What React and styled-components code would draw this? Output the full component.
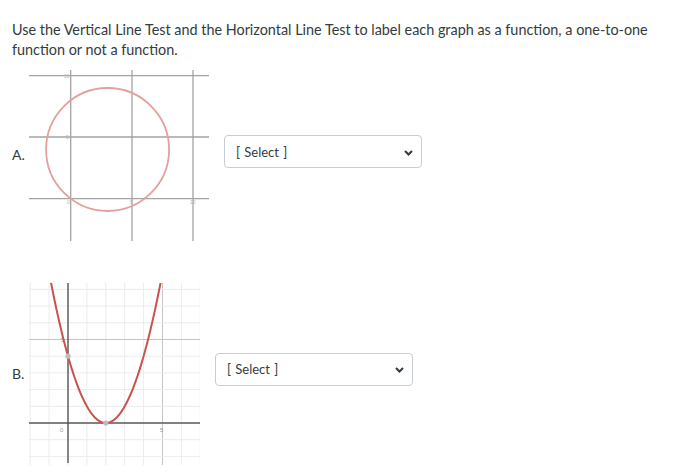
import React from "react";
import styled, { createGlobalStyle } from "styled-components";

const GlobalStyle = createGlobalStyle`
  body {
    margin: 0;
    background: #ffffff;
    font-family: Lato, "Open Sans", sans-serif;
    color: #2d3b45;
  }
`;

const CircleGraph = () => (
  <svg width="180" height="171" viewBox="0 0 180 171">
    <g stroke="#a3a3a3" strokeWidth="1.3">
      <line x1="0" y1="5.7" x2="180" y2="5.7" />
      <line x1="0" y1="67" x2="180" y2="67" />
      <line x1="0" y1="128.7" x2="180" y2="128.7" />
      <line x1="41.7" y1="0" x2="41.7" y2="171" />
      <line x1="103" y1="0" x2="103" y2="171" />
      <line x1="164" y1="0" x2="164" y2="171" />
    </g>
    <g fill="#b5b5b5" fontSize="5" fontFamily="Liberation Sans, sans-serif">
      <text x="35" y="7.5">10</text>
      <text x="37" y="69">5</text>
      <text x="38" y="134">0</text>
      <text x="101" y="134">5</text>
      <text x="161" y="134">10</text>
    </g>
    <circle cx="78.6" cy="79.5" r="61.5" fill="none" stroke="#e3a09e" strokeWidth="1.8" />
  </svg>
);

const ParabolaGraph = () => {
  const ux = 18.9;
  const uy = 16.7;
  const ox = 39;
  const oy = 140;
  const verticals = [];
  for (let k = -2; k <= 7; k++) verticals.push(k);
  const horizontals = [];
  for (let k = -2; k <= 8; k++) horizontals.push(k);
  const pts = [];
  for (let x = -0.95; x <= 4.95; x += 0.05) {
    const y = oy - uy * (x - 2) * (x - 2);
    pts.push(`${(ox + ux * x).toFixed(2)},${y.toFixed(2)}`);
  }
  return (
    <svg width="171" height="182" viewBox="0 0 171 182">
      <g strokeWidth="1">
        {verticals.map((k) => (
          <line
            key={"v" + k}
            x1={ox + ux * k}
            y1="0"
            x2={ox + ux * k}
            y2="182"
            stroke={k === 5 ? "#c4c4c4" : "#ececec"}
          />
        ))}
        {horizontals.map((k) => (
          <line
            key={"h" + k}
            x1="0"
            y1={oy - uy * k}
            x2="171"
            y2={oy - uy * k}
            stroke={k === 5 ? "#c4c4c4" : "#ececec"}
          />
        ))}
      </g>
      <line x1="0" y1={oy} x2="171" y2={oy} stroke="#5a5a5a" strokeWidth="1.3" />
      <line x1={ox} y1="0" x2={ox} y2="180" stroke="#4a4a4a" strokeWidth="1.3" />
      <g fill="#9a9a9a" fontSize="6" fontFamily="Liberation Sans, sans-serif">
        <text x="32" y="59">5</text>
        <text x="31" y="149">0</text>
        <text x="131" y="149">5</text>
      </g>
      <polyline points={pts.join(" ")} fill="none" stroke="#c8524d" strokeWidth="2" />
      <circle cx={ox} cy={oy - uy * 4} r="2.6" fill="#bdbdbd" />
      <circle cx={ox + ux * 2} cy={oy} r="2.6" fill="#bdbdbd" />
    </svg>
  );
};

const Chevron = () => (
  <svg width="9" height="6" viewBox="0 0 9 6">
    <path d="M1 1 L4.5 4.5 L8 1" fill="none" stroke="#2d3b45" strokeWidth="2" />
  </svg>
);

const App = () => (
  <>
    <GlobalStyle />
    <Question>
      <Prompt>
        Use the Vertical Line Test and the Horizontal Line Test to label each graph as a function, a one-to-one
        function or not a function.
      </Prompt>
      <AnswerRow $top={11}>
        <Label>A.</Label>
        <CircleGraph />
        <SelectBox $lift={4}>
          <span>[ Select ]</span>
          <Chevron />
        </SelectBox>
      </AnswerRow>
      <AnswerRow $top={42}>
        <Label>B.</Label>
        <ParabolaGraph />
        <SelectBox $lift={5}>
          <span>[ Select ]</span>
          <Chevron />
        </SelectBox>
      </AnswerRow>
    </Question>
  </>
);

const Question = styled.div`
  padding: 20px 12px 0 12px;
`;

const Prompt = styled.p`
  margin: 0;
  font: 400 14.4px/19.5px Lato, sans-serif;
  color: #333b40;
  width: 660px;
`;

const AnswerRow = styled.div`
  display: flex;
  align-items: center;
  margin-top: ${(p) => p.$top}px;

  svg {
    flex: none;
  }
`;

const Label = styled.div`
  width: 17px;
  font: 400 14px Lato, sans-serif;
  color: #333b40;
  margin-top: -2px;
`;

const SelectBox = styled.div`
  box-sizing: border-box;
  width: 198px;
  height: 33px;
  margin-left: 15px;
  margin-top: -${(p) => p.$lift * 2}px;
  display: flex;
  align-items: center;
  justify-content: space-between;
  padding: 0 8px 0 11px;
  border: 1px solid #c7cdd1;
  border-radius: 4px;
  background: #ffffff;
  font: 400 13px Lato, sans-serif;
  color: #333b40;
  word-spacing: 1px;

  svg {
    margin-top: 2px;
  }
`;

export default App;
